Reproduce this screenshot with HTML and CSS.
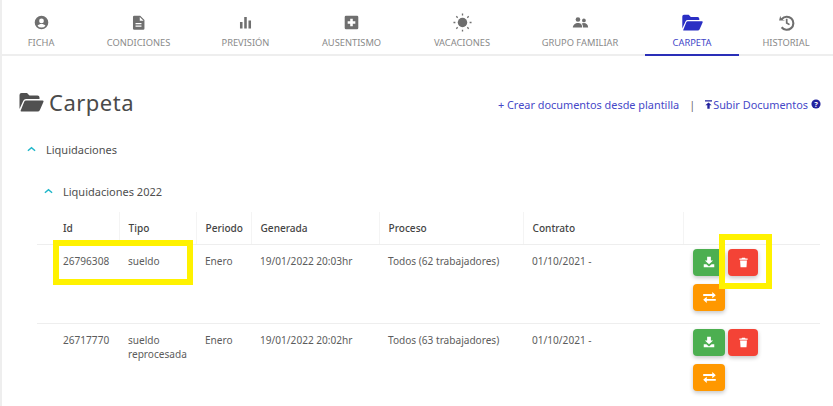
FILE: index.html
```html
<!DOCTYPE html>
<html lang="es">
<head>
<meta charset="utf-8">
<title>Carpeta</title>
<link rel="stylesheet" href="styles.css">
</head>
<body>
<svg class="sprite" width="0" height="0" aria-hidden="true">
  <symbol id="i-folder" viewBox="0 0 24 20"><path d="M0 3a2 2 0 0 1 2-2h5.500l2.500 2.500h8a2 2 0 0 1 2 2V7H6.500a3 3 0 0 0-2.700 1.700L0 17z"/><path d="M6.500 8.500H23a1 1 0 0 1 .9 1.400l-3.500 8a2.500 2.500 0 0 1-2.300 1.600H1.800a.7.7 0 0 1-.6-1l3.500-8.700a2 2 0 0 1 1.800-1.300z"/></symbol>
  <symbol id="i-download" viewBox="0 0 16 16"><path d="M5.500 1h5v5h3L8 11 2.500 6h3z"/><path d="M1 11h3.500L8 14l3.500-3H15v4H1z"/></symbol>
  <symbol id="i-trash" viewBox="0 0 16 16"><path d="M5.800 1h4.400l.6 1.300H14v1.700H2V2.300h3.200z"/><path d="M3 5h10l-.7 10H3.700z"/></symbol>
  <symbol id="i-swap" viewBox="0 0 16 14"><path d="M0 2.700h11.500V0L16 4l-4.500 4V5.100H0z"/><path d="M16 8.300H4.500V5.500L0 9.500l4.500 4v-2.800H16z" transform="translate(0 .5)"/></symbol>
</svg>

<nav class="tabs">
  <a class="tab tab-a">
    <svg class="tab-icon" viewBox="0 0 20 20"><path fill-rule="evenodd" d="M10 2a8 8 0 1 0 0 16 8 8 0 0 0 0-16zm0 3.300a2.800 2.800 0 1 1 0 5.600 2.800 2.800 0 0 1 0-5.600zM10 16a6 6 0 0 1-4.700-2.300c.9-1.300 3-2 4.700-2s3.800.7 4.700 2A6 6 0 0 1 10 16z"/></svg>
    <span>FICHA</span></a>
  <a class="tab tab-b">
    <svg class="tab-icon" viewBox="0 0 20 20"><path fill-rule="evenodd" d="M5 2h7l5 5v10a1.500 1.500 0 0 1-1.500 1.500h-10.500A1.500 1.500 0 0 1 3.500 17V3.500A1.500 1.500 0 0 1 5 2zm6.500 1.500V8h4.500zM6.500 10.500v1.500h7v-1.500zm0 3v1.500h7v-1.500z"/></svg>
    <span>CONDICIONES</span></a>
  <a class="tab tab-c">
    <svg class="tab-icon" viewBox="0 0 20 20"><path d="M3.500 9.500h3V17h-3zM8.500 3.500h3V17h-3zM13.500 7.500h3V17h-3z"/></svg>
    <span>PREVISIÓN</span></a>
  <a class="tab tab-d">
    <svg class="tab-icon" viewBox="0 0 20 20"><path fill-rule="evenodd" d="M3.500 2h13A1.500 1.500 0 0 1 18 3.500v13a1.500 1.500 0 0 1-1.500 1.500h-13A1.500 1.500 0 0 1 2 16.500v-13A1.500 1.500 0 0 1 3.500 2zm5 3.500v3h-3v3h3v3h3v-3h3v-3h-3v-3z"/></svg>
    <span>AUSENTISMO</span></a>
  <a class="tab tab-e">
    <svg class="tab-icon tab-icon-lg" viewBox="0 0 20 20"><circle cx="10" cy="10" r="5"/><path d="M9.300.5h1.400v2H9.300zM9.300 17.500h1.400v2H9.300zM.5 9.300h2v1.400h-2zM17.500 9.300h2v1.400h-2zM3 4l1-1 1.400 1.400-1 1zM14.600 15.600l1-1L17 16l-1 1zM16 3l1 1-1.400 1.400-1-1zM4.400 14.600l1 1L4 17l-1-1z"/></svg>
    <span>VACACIONES</span></a>
  <a class="tab tab-f">
    <svg class="tab-icon" viewBox="0 0 20 20"><circle cx="7" cy="6.500" r="2.700"/><circle cx="14" cy="7.500" r="2.200"/><path d="M1 16c0-3.500 3-5.500 6-5.500s5 1.500 5 5.500H1z"/><path d="M13 16c0-2-.5-3.500-1.700-4.700 1-.5 1.900-.7 2.700-.7 2.700 0 5 1.800 5 5.400z"/></svg>
    <span>GRUPO FAMILIAR</span></a>
  <a class="tab tab-g is-active">
    <svg class="tab-icon tab-icon-xl"><use href="#i-folder"/></svg>
    <span>CARPETA</span></a>
  <a class="tab tab-h">
    <svg class="tab-icon tab-icon-lg" viewBox="0 0 20 20"><path d="M3.400 2.800l.9 2.700A8 8 0 1 1 4 15.700l1.700-1.400A5.800 5.800 0 1 0 5.900 7L8.600 8H2.200z"/><path d="M9.300 6h1.800v4l2.500 1.500-.9 1.500-3.400-2z"/></svg>
    <span>HISTORIAL</span></a>
</nav>

<main class="content">
  <header class="page-head">
    <h1 class="title"><svg class="title-icon"><use href="#i-folder"/></svg>Carpeta</h1>
    <div class="actions">
      <a class="action">+ Crear documentos desde plantilla</a>
      <span class="sep">|</span>
      <a class="action">
        <svg class="upload" viewBox="0 0 10 12"><path d="M0 0h10v1.800H0zM5 3l4.500 4.200H6.700V12H3.300V7.200H.5z"/></svg>Subir Documentos
        <svg class="help" viewBox="0 0 12 12"><circle cx="6" cy="6" r="5.500"/><text x="6" y="9" text-anchor="middle" class="help-q">?</text></svg>
      </a>
    </div>
  </header>

  <div class="group group-1"><svg class="chev" viewBox="0 0 10 6"><path d="M1 5l4-3.500L9 5"/></svg>Liquidaciones</div>
  <div class="group group-2"><svg class="chev" viewBox="0 0 10 6"><path d="M1 5l4-3.500L9 5"/></svg>Liquidaciones 2022</div>

  <div class="table-wrap">
    <table class="grid">
      <colgroup>
        <col class="c1"><col class="c2"><col class="c3"><col class="c4"><col class="c5"><col class="c6"><col class="c7">
      </colgroup>
      <thead>
        <tr><th class="first">Id</th><th>Tipo</th><th>Periodo</th><th>Generada</th><th>Proceso</th><th>Contrato</th><th></th></tr>
      </thead>
      <tbody>
        <tr>
          <td class="first">26796308</td><td>sueldo</td><td>Enero</td><td>19/01/2022 20:03hr</td><td>Todos (62 trabajadores)</td><td>01/10/2021 -</td>
          <td class="btns"><div class="btn-set">
            <button class="btn green"><svg><use href="#i-download"/></svg></button><button class="btn red"><svg><use href="#i-trash"/></svg></button><button class="btn orange"><svg><use href="#i-swap"/></svg></button>
          </div></td>
        </tr>
        <tr>
          <td class="first">26717770</td><td>sueldo reprocesada</td><td>Enero</td><td>19/01/2022 20:02hr</td><td>Todos (63 trabajadores)</td><td>01/10/2021 -</td>
          <td class="btns"><div class="btn-set">
            <button class="btn green"><svg><use href="#i-download"/></svg></button><button class="btn red"><svg><use href="#i-trash"/></svg></button><button class="btn orange"><svg><use href="#i-swap"/></svg></button>
          </div></td>
        </tr>
      </tbody>
    </table>
  </div>
</main>

<div class="mark mark-row"></div>
<div class="mark mark-del"></div>
</body>
</html>
```
FILE: styles.css
```css
* { box-sizing: border-box; }
html, body { height: 100%; }
body {
  margin: 0;
  position: relative;
  overflow: hidden;
  height: 406px;
  background: #fff;
  border-left: 2px solid #eeeeee;
  font-family: "Noto Sans", "Open Sans", sans-serif;
  color: #555;
}
.sprite { position: absolute; }

.tabs {
  display: flex;
  height: 56px;
  border-bottom: 2px solid #eeeeee;
  font-size: 9.300px;
  color: #8a8a8a;
}
.tab {
  display: flex;
  flex: none;
  flex-direction: column;
  align-items: center;
  justify-content: flex-end;
  height: 56px;
  padding-bottom: 6px;
  white-space: nowrap;
}
.tab span { line-height: 14px; }
.tab-a { width: 78px; }
.tab-b { width: 117px; }
.tab-c { width: 97px; }
.tab-d { width: 115px; }
.tab-e { width: 106px; }
.tab-f { width: 130px; }
.tab-g { width: 94px; }
.tab-h { width: 94px; }
.tab-icon {
  width: 17px;
  height: 17px;
  margin-bottom: 5px;
  fill: #6f6f6f;
}
.tab-icon-lg { width: 19px; height: 19px; margin-bottom: 4px; }
.tab-icon-xl { width: 21px; height: 17px; }
.is-active {
  color: #3f46c8;
  border-bottom: 2px solid #2a2fb8;
  padding-bottom: 4px;
}
.is-active .tab-icon { fill: #2a2fc4; }

.page-head {
  display: flex;
  align-items: center;
  justify-content: space-between;
  height: 72px;
  padding: 24px 12px 0 17px;
}
.title {
  display: flex;
  align-items: center;
  margin: 0 0 4px;
  font-size: 22px;
  font-weight: 400;
  letter-spacing: .5px;
  color: #4a4a4a;
}
.title-icon { width: 25px; height: 20px; margin-right: 5px; fill: #505050; }
.actions {
  display: flex;
  align-items: center;
  font-size: 10.900px;
  color: #4648c8;
}
.action { display: flex; align-items: center; white-space: nowrap; }
.sep { margin: 0 10px; color: #666; }
.upload { width: 7px; height: 9px; margin-right: 1px; fill: #23239e; }
.help { width: 10px; height: 10px; margin-left: 3px; fill: #23239e; }
.help-q { font-size: 9px; font-weight: 700; fill: #fff; font-family: "Noto Sans", sans-serif; }

.group {
  display: flex;
  align-items: center;
  font-size: 11px;
  color: #4f4f4f;
}
.group-1 { height: 20px; margin-top: 11px; padding-left: 25px; }
.group-2 { height: 20px; margin-top: 22px; padding-left: 42px; }
.chev {
  width: 9px;
  height: 6px;
  margin-right: 10px;
  fill: none;
  stroke: #1fb6c9;
  stroke-width: 1.600;
}

.table-wrap { margin: 11px 11px 0 35px; }
.grid {
  width: 783px;
  table-layout: fixed;
  border-collapse: collapse;
  font-size: 10.100px;
}
.c1 { width: 82px; } .c2 { width: 77px; } .c3 { width: 55px; } .c4 { width: 128px; }
.c5 { width: 144px; } .c6 { width: 160px; } .c7 { width: 137px; }
.grid th {
  height: 32px;
  padding: 0 9px;
  text-align: left;
  font-weight: 500;
  color: #444;
  border-right: 1px solid #f4f4f4;
  border-bottom: 1px solid #eeeeee;
}
.grid th:last-child { border-right: 0; }
.grid td {
  height: 79px;
  padding: 9px 9px 0;
  vertical-align: top;
  line-height: 14px;
  color: #5c5c5c;
  border-bottom: 1px solid #eeeeee;
}
.grid tbody tr:last-child td { border-bottom: 0; }
.grid .first { padding-left: 26px; }
.grid .btns { padding: 4px 0 0 10px; }
.grid tbody tr:last-child .btns { padding-top: 5px; }
.btn-set {
  display: flex;
  flex-wrap: wrap;
  gap: 8px 3px;
  width: 68px;
}
.btn {
  display: flex;
  align-items: center;
  justify-content: center;
  width: 32px;
  height: 27px;
  padding: 0;
  border: 0;
  border-radius: 4px;
  box-shadow: 0 2px 4px rgba(0, 0, 0, .22);
}
.btn svg { width: 12px; height: 12px; fill: #fff; }
.green { background: #4caf50; }
.red { background: #f44336; width: 30px; }
.orange { background: #ff9800; }
.orange svg { width: 13px; height: 11px; }
.red svg { width: 11px; height: 11px; }

.mark { position: absolute; border: 6px solid #fff200; }
.mark-row { left: 51px; top: 240px; width: 140px; height: 45px; }
.mark-del { left: 717px; top: 234px; width: 53px; height: 55px; }
```
